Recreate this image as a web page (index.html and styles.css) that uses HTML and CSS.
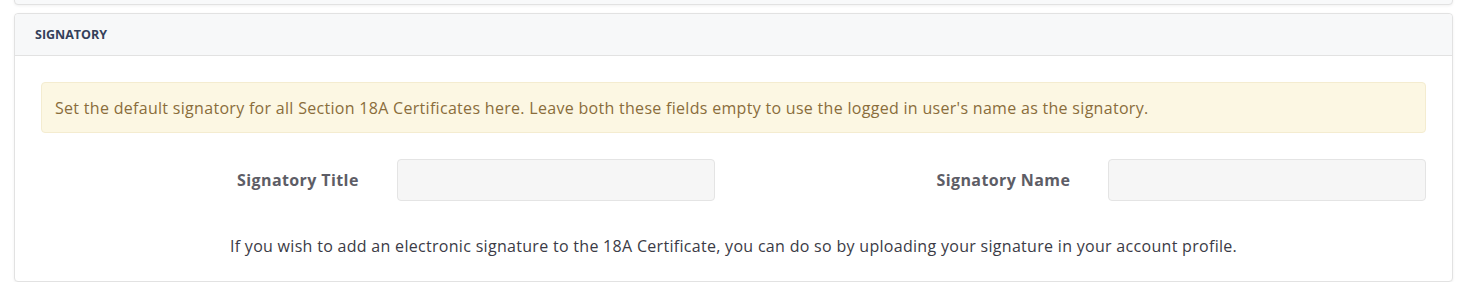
FILE: index.html
```html
<!DOCTYPE html>
<html lang="en">
<head>
    <meta charset="UTF-8">
    <meta name="viewport" content="width=device-width, initial-scale=1.0">
    <title>Signatory</title>
    <link rel="stylesheet" href="styles.css">
</head>
<body>
    <div class="card card-prev"></div>

    <div class="card">
        <div class="card-header">Signatory</div>
        <div class="card-body">
            <div class="alert">
                Set the default signatory for all Section 18A Certificates here. Leave both these fields empty to use the logged in user's name as the signatory.
            </div>
            <form class="form-row">
                <label for="SignatoryTitle">Signatory Title</label>
                <input type="text" id="SignatoryTitle">
                <label for="SignatoryName">Signatory Name</label>
                <input type="text" id="SignatoryName">
            </form>
            <p class="note">If you wish to add an electronic signature to the 18A Certificate, you can do so by uploading your signature in your account profile.</p>
        </div>
    </div>
</body>
</html>
```

FILE: styles.css
```css
body {
    font-family: "Open Sans", "Noto Sans", sans-serif;
    font-size: 16px;
    color: #3b3b46;
    margin: 0;
    padding: 0 14px;
    background: #fff;
}
.card {
    background: #fff;
    border: 1px solid #e2e2e2;
    border-radius: 4px;
    box-shadow: 0 1px 3px rgba(0, 0, 0, 0.06);
}
.card-prev {
    height: 20px;
    margin-top: -17px;
    margin-bottom: 8px;
    background: #f8f9fa;
}
.card-header {
    background: #f7f8f9;
    border-bottom: 1px solid #e2e2e2;
    border-radius: 4px 4px 0 0;
    height: 41px;
    line-height: 41px;
    padding: 0 20px;
    font-size: 12.5px;
    font-weight: 700;
    text-transform: uppercase;
    color: #34405a;
}
.card-body {
    padding: 26px 26px 24px;
}
.alert {
    background: #fcf7e3;
    border: 1px solid #f4ecd0;
    border-radius: 4px;
    color: #8a6d3b;
    padding: 0 13px;
    height: 49px;
    line-height: 50px;
    letter-spacing: 0.3px;
}
.form-row {
    display: grid;
    grid-template-columns: repeat(4, 1fr);
    column-gap: 38px;
    align-items: center;
    margin: 26px 0 0;
}
.form-row label {
    text-align: right;
    font-weight: 700;
    letter-spacing: 0.4px;
    color: #5d5d66;
}
.form-row input {
    height: 42px;
    box-sizing: border-box;
    border: 1px solid #e4e4e4;
    border-radius: 4px;
    background: #f6f6f6;
    padding: 6px 12px;
    font-family: inherit;
    font-size: 14px;
}
.note {
    text-align: center;
    margin: 34px 0 0;
    line-height: 22px;
    letter-spacing: 0.3px;
}
```
